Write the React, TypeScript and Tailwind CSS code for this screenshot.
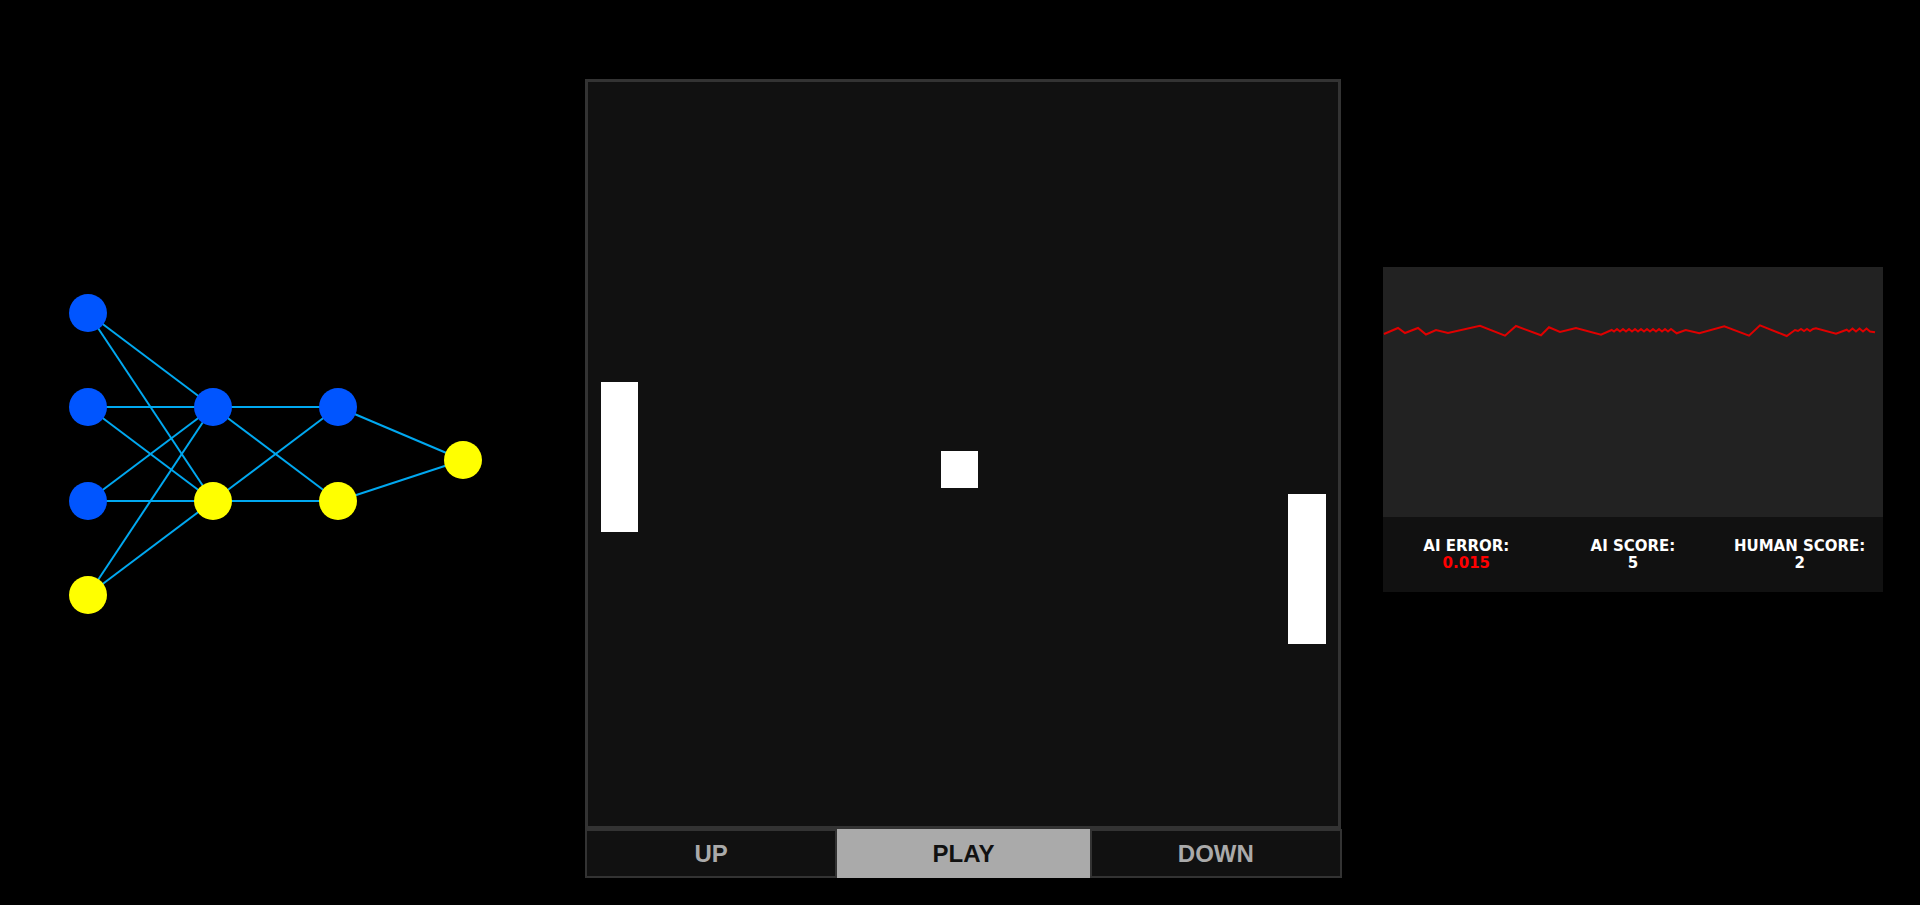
import React from "react";

const L0 = [313, 407, 501, 595].map((y) => ({ x: 88, y }));
const L1 = [407, 501].map((y) => ({ x: 213, y }));
const L2 = [407, 501].map((y) => ({ x: 338, y }));
const L3 = [{ x: 463, y: 460 }];

const colors0 = ["#0055ff", "#0055ff", "#0055ff", "#ffff00"];
const colors1 = ["#0055ff", "#ffff00"];
const colors2 = ["#0055ff", "#ffff00"];
const colors3 = ["#ffff00"];

function edges(a: { x: number; y: number }[], b: { x: number; y: number }[]) {
  const out: [number, number, number, number][] = [];
  a.forEach((p) => b.forEach((q) => out.push([p.x, p.y, q.x, q.y])));
  return out;
}

const allEdges = [...edges(L0, L1), ...edges(L1, L2), ...edges(L2, L3)];

function zig(x0: number, x1: number, yA: number, yB: number, step: number) {
  const pts: string[] = [];
  let i = 0;
  for (let x = x0; x <= x1; x += step) {
    pts.push(`${x},${i % 2 === 0 ? yA : yB}`);
    i++;
  }
  return pts;
}

const linePts = [
  "1,67",
  "15,61",
  "22,66",
  "35,61",
  "43,67.5",
  "53,63",
  "65,66",
  "97,58.7",
  "122,68.7",
  "133,59",
  "158,68.3",
  "166,60.3",
  "177,65",
  "193,61",
  "218,67.7",
  "228.7,63",
  ...zig(231, 290, 64.5, 62, 3),
  "293.7,66.3",
  "302.7,63",
  "316.3,66.3",
  "341.3,59.3",
  "366,68.7",
  "377,58.3",
  "403.7,69",
  "412,63",
  ...zig(415, 432, 64, 62, 3),
  "433,61.3",
  "453,66.7",
  "463.7,62.7",
  ...zig(466, 487, 64.5, 61.5, 3.5),
  "492,65.3",
].join(" ");

export default function App() {
  return (
    <div className="w-[1920px] h-[905px] bg-black flex items-start overflow-hidden">
      <svg width={585} height={905} className="shrink-0 block">
        {allEdges.map(([x1, y1, x2, y2], i) => (
          <line key={i} x1={x1} y1={y1} x2={x2} y2={y2} stroke="#00a8f0" strokeWidth={2} />
        ))}
        {L0.map((p, i) => (
          <circle key={"a" + i} cx={p.x} cy={p.y} r={19} fill={colors0[i]} />
        ))}
        {L1.map((p, i) => (
          <circle key={"b" + i} cx={p.x} cy={p.y} r={19} fill={colors1[i]} />
        ))}
        {L2.map((p, i) => (
          <circle key={"c" + i} cx={p.x} cy={p.y} r={19} fill={colors2[i]} />
        ))}
        {L3.map((p, i) => (
          <circle key={"d" + i} cx={p.x} cy={p.y} r={19} fill={colors3[i]} />
        ))}
      </svg>

      <div className="mt-[79px] w-[757px] shrink-0 flex flex-col">
        <div className="relative w-[756px] h-[750px] border-[3px] border-[#333] bg-[#111]">
          <div className="absolute left-[12.5px] top-[300px] w-[37.5px] h-[150px] bg-white" />
          <div className="absolute left-[352.5px] top-[368.5px] w-[37.5px] h-[37.5px] bg-white" />
          <div className="absolute left-[700px] top-[412px] w-[37.5px] h-[150px] bg-white" />
        </div>
        <div className="flex h-[49px] w-[757px] font-['Liberation_Sans',Arial,sans-serif] font-bold text-[24px]">
          <div className="flex-1 border-2 border-[#333] bg-[#111] text-[#aaa] flex items-center justify-center">
            UP
          </div>
          <div className="flex-1 border-2 border-[#aaa] bg-[#aaa] text-[#111] flex items-center justify-center">
            PLAY
          </div>
          <div className="flex-1 border-2 border-[#333] bg-[#111] text-[#aaa] flex items-center justify-center">
            DOWN
          </div>
        </div>
      </div>

      <div className="ml-[41px] mt-[267px] w-[500px] shrink-0">
        <svg width={500} height={250} className="block bg-[#222]">
          <polyline points={linePts} fill="none" stroke="#e00000" strokeWidth={2} strokeLinejoin="miter" />
        </svg>
        <div className="h-[75px] bg-[#111] grid grid-cols-3 items-center text-center text-white font-bold text-[15px] leading-[17px] font-['Verdana','DejaVu_Sans',sans-serif]">
          <div>
            <div>AI ERROR:</div>
            <div className="text-[#ff0000]">0.015</div>
          </div>
          <div>
            <div>AI SCORE:</div>
            <div>5</div>
          </div>
          <div>
            <div>HUMAN SCORE:</div>
            <div>2</div>
          </div>
        </div>
      </div>
    </div>
  );
}
